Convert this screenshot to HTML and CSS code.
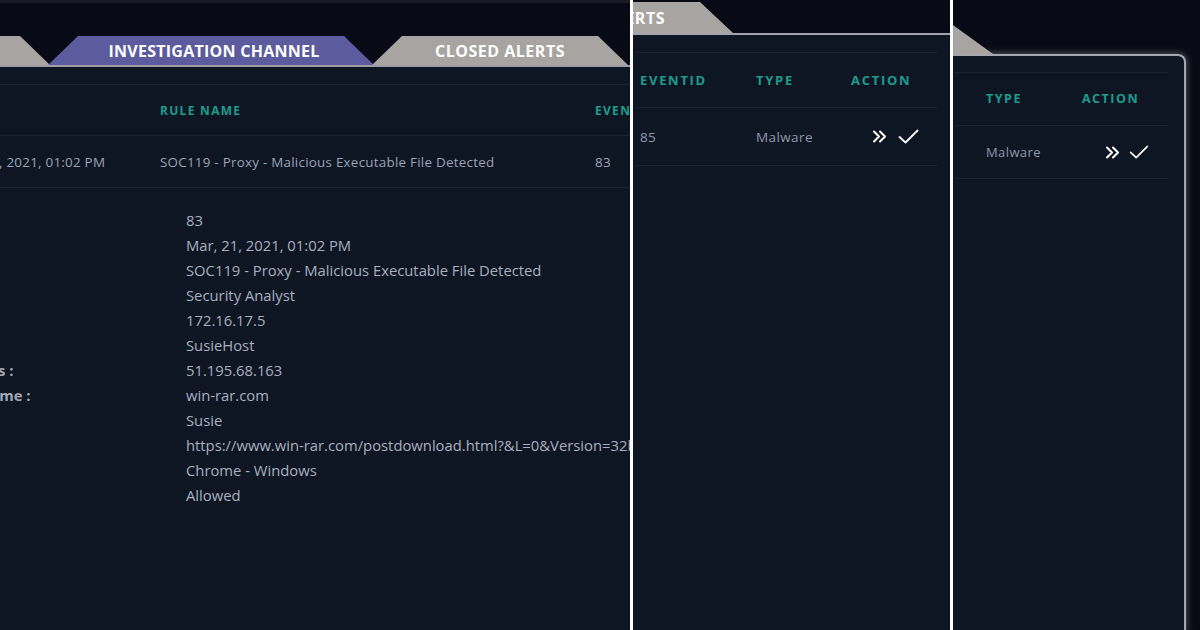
FILE: index.html
```html
<!DOCTYPE html>
<html lang="en">
<head>
<meta charset="utf-8">
<title>Investigation Channel</title>
<link rel="stylesheet" href="styles.css">
</head>
<body>
<div class="shot">
  <section class="pane pane-a">
    <nav class="tabbar tabbar-a">
      <div class="tab tab-gray tab-first"><span>MONITORING</span></div>
      <div class="tab tab-active tab-inv"><span>INVESTIGATION CHANNEL</span></div>
      <div class="tab tab-gray tab-closed"><span>CLOSED ALERTS</span></div>
    </nav>
    <div class="a-body">
      <div class="trow a-head">
        <div class="ac ac-date">DATE</div>
        <div class="ac ac-rule">RULE NAME</div>
        <div class="ac ac-eid">EVENTID</div>
      </div>
      <div class="trow a-data">
        <div class="ac ac-date">Mar, 21, 2021, 01:02 PM</div>
        <div class="ac ac-rule">SOC119 - Proxy - Malicious Executable File Detected</div>
        <div class="ac ac-eid">83</div>
      </div>
      <dl class="detail">
        <dt>EventID :</dt><dd>83</dd>
        <dt>Event Time :</dt><dd>Mar, 21, 2021, 01:02 PM</dd>
        <dt>Rule :</dt><dd>SOC119 - Proxy - Malicious Executable File Detected</dd>
        <dt>Level :</dt><dd>Security Analyst</dd>
        <dt>Source Address :</dt><dd>172.16.17.5</dd>
        <dt>Source Hostname :</dt><dd>SusieHost</dd>
        <dt>Destination Address :</dt><dd>51.195.68.163</dd>
        <dt>Destination Hostname :</dt><dd>win-rar.com</dd>
        <dt>Username :</dt><dd>Susie</dd>
        <dt>Request URL :</dt><dd>https://www.win-rar.com/postdownload.html?&amp;L=0&amp;Version=32bit</dd>
        <dt>User Agent :</dt><dd>Chrome - Windows</dd>
        <dt>Device Action :</dt><dd>Allowed</dd>
      </dl>
    </div>
  </section>

  <section class="pane pane-b">
    <nav class="tabbar tabbar-b">
      <div class="tab tab-gray tab-b"><span>CLOSED ALERTS</span></div>
    </nav>
    <div class="b-body">
      <div class="trow b-head">
        <div class="bc bc-eid">EVENTID</div>
        <div class="bc bc-type">TYPE</div>
        <div class="bc bc-act">ACTION</div>
      </div>
      <div class="trow b-data">
        <div class="bc bc-eid">85</div>
        <div class="bc bc-type">Malware</div>
        <div class="bc bc-act icons">
          <svg class="ic-go" viewBox="0 0 15 13" width="15" height="13"><path d="M2 1.5 L7 6.5 L2 11.5 M8 1.5 L13 6.5 L8 11.5" fill="none" stroke="#ffffff" stroke-width="2.1" stroke-linecap="round" stroke-linejoin="round"/></svg>
          <svg class="ic-ok" viewBox="0 0 21 15" width="21" height="15"><path d="M1.5 8 L7.5 13.5 L19.5 1.5" fill="none" stroke="#ffffff" stroke-width="1.8" stroke-linecap="round" stroke-linejoin="round"/></svg>
        </div>
      </div>
    </div>
  </section>

  <section class="pane pane-c">
    <nav class="tabbar tabbar-c">
      <div class="tab tab-gray tab-c"></div>
    </nav>
    <div class="card">
      <div class="trow c-head">
        <div class="cc cc-type">TYPE</div>
        <div class="cc cc-act">ACTION</div>
      </div>
      <div class="trow c-data">
        <div class="cc cc-type">Malware</div>
        <div class="cc cc-act icons">
          <svg class="ic-go" viewBox="0 0 15 13" width="15" height="13"><path d="M2 1.5 L7 6.5 L2 11.5 M8 1.5 L13 6.5 L8 11.5" fill="none" stroke="#ffffff" stroke-width="2.1" stroke-linecap="round" stroke-linejoin="round"/></svg>
          <svg class="ic-ok" viewBox="0 0 21 15" width="20" height="14"><path d="M1.5 8 L7.5 13.5 L19.5 1.5" fill="none" stroke="#ffffff" stroke-width="1.8" stroke-linecap="round" stroke-linejoin="round"/></svg>
        </div>
      </div>
    </div>
  </section>
</div>
</body>
</html>
```

FILE: styles.css
```css
* { box-sizing: border-box; }
html, body { margin: 0; padding: 0; }
body {
  width: 1200px;
  height: 630px;
  overflow: hidden;
  background: #ffffff;
  font-family: "Open Sans", "Noto Sans", sans-serif;
}
.shot {
  display: flex;
  gap: 3px;
  height: 630px;
}
.pane {
  height: 630px;
  overflow: hidden;
  flex: none;
  display: flex;
  flex-direction: column;
  background: #0e1624;
}
.pane-a { width: 630px; }
.pane-b { width: 317px; }
.pane-c { flex: 1; background: #080a16; }

/* ---------- tabs ---------- */
.tabbar {
  display: flex;
  align-items: flex-end;
  background: #080a16;
  flex: none;
}
.tab {
  flex: none;
  display: flex;
  align-items: center;
  justify-content: center;
  color: #ffffff;
  font-weight: 700;
  font-size: 16px;
  letter-spacing: 0.5px;
  white-space: nowrap;
}
.tab-gray { background: #a8a4a1; }
.tab-active { background: #5b5b9e; }

.tabbar-a {
  border-top: 3px solid #191c28;
  padding-top: 33px;
  border-bottom: 2px solid #9d9da7;
  margin-left: -220px;
}
.tabbar-a .tab {
  height: 29px;
  clip-path: polygon(30px 0, calc(100% - 30px) 0, 100% 100%, 0 100%);
}
.tabbar-a .tab + .tab { margin-left: -2px; }
.tab-first { width: 270px; }
.tab-inv { width: 326px; letter-spacing: 0.25px; padding-left: 6px; }
.tab-closed { width: 256px; }

.tabbar-b {
  padding-top: 2px;
  border-bottom: 2px solid #a2a2ac;
}
.tab-b {
  height: 31px;
  width: 260px;
  margin-left: -160px;
  justify-content: flex-end;
  padding-right: 68px;
  clip-path: polygon(33px 0, calc(100% - 33px) 0, 100% 100%, 0 100%);
}

.tabbar-c {
  padding-top: 25px;
}
.tab-c {
  height: 29px;
  width: 200px;
  margin-left: -160px;
  clip-path: polygon(40px 0, calc(100% - 40px) 0, 100% 100%, 0 100%);
}

/* ---------- table rows ---------- */
.trow {
  display: flex;
  align-items: center;
  border-top: 1px solid #1a2335;
}

/* pane A */
.a-body {
  margin-left: -220px;
  padding-top: 17px;
}
.a-head, .a-data { padding-left: 170px; }
.a-head {
  height: 51px;
  color: #1b9d8e;
  font-weight: 700;
  font-size: 12px;
  letter-spacing: 1.3px;
}
.a-data {
  height: 53px;
  border-bottom: 1px solid #1a2335;
  color: #9aa2b3;
  font-size: 13.4px;
  letter-spacing: 0.25px;
}
.ac { flex: none; white-space: nowrap; }
.ac-date { width: 210px; }
.ac-rule { width: 435px; }

.detail {
  display: grid;
  grid-template-columns: 330px 1fr;
  margin: 0;
  padding: 20px 0 0 76px;
  line-height: 25px;
  font-size: 14.8px;
  color: #a9afbe;
}
.detail dt {
  font-weight: 700;
  color: #a3a8b6;
  white-space: nowrap;
}
.detail dd {
  margin: 0;
  white-space: nowrap;
}

/* pane B */
.b-body { padding-top: 17px; }
.b-head, .b-data { width: 304px; padding-left: 7px; }
.b-head {
  height: 55px;
  padding-bottom: 1px;
  color: #1b9d8e;
  font-weight: 700;
  font-size: 13px;
  letter-spacing: 1.7px;
}
.b-data {
  height: 59px;
  border-bottom: 1px solid #1a2335;
  color: #8e97a9;
  font-size: 13.5px;
  letter-spacing: 0.4px;
}
.bc { flex: none; white-space: nowrap; }
.bc-eid { width: 116px; }
.bc-type { width: 95px; }
.b-data .bc-act { padding-left: 21px; }

.icons {
  display: flex;
  align-items: center;
  gap: 11px;
}
.icons svg { display: block; flex: none; }

/* pane C */
.card {
  flex: 1;
  margin-left: -12px;
  margin-right: 14px;
  padding-top: 16px;
  padding-left: 12px;
  background: #0e1624;
  border-top: 2px solid #a6a6ae;
  border-right: 2px solid #a6a6ae;
  border-top-right-radius: 8px;
  box-shadow: 0 0 6px 1px rgba(170, 170, 182, 0.45);
}
.c-head, .c-data { width: 215px; padding-left: 33px; }
.c-head {
  height: 53px;
  padding-bottom: 1px;
  color: #1b9d8e;
  font-weight: 700;
  font-size: 12.5px;
  letter-spacing: 1.5px;
}
.c-data {
  height: 54px;
  border-bottom: 1px solid #1a2335;
  color: #8e97a9;
  font-size: 13px;
  letter-spacing: 0.4px;
}
.cc { flex: none; white-space: nowrap; }
.cc-type { width: 96px; }
.c-data .cc-act { padding-left: 23px; gap: 9px; }
```
